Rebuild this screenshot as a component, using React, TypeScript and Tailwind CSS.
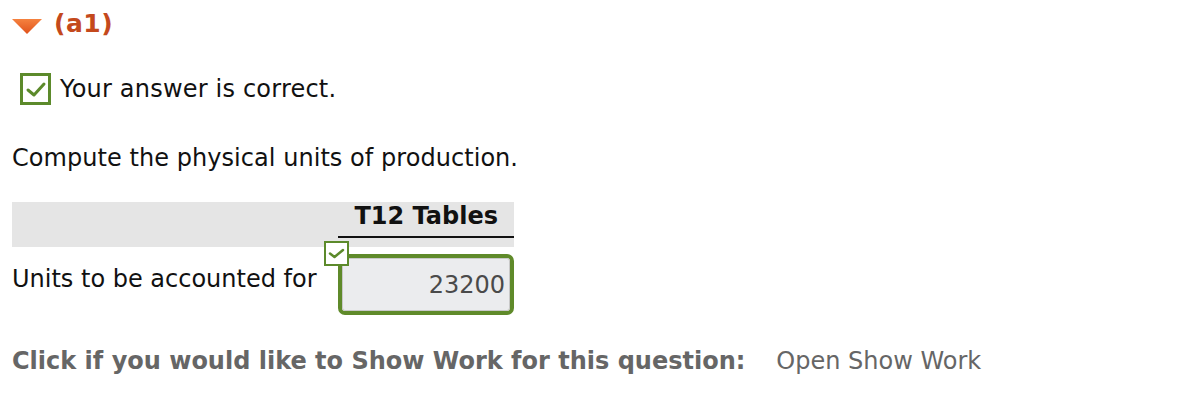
import React from "react";

export default function App() {
  return (
    <div className="w-[1192px] h-[420px] bg-white font-['DejaVu_Sans','Liberation_Sans',sans-serif] text-[24px] leading-[28px] text-[#111]">
      <div className="px-3 pt-[10px]">
        {/* Header */}
        <div className="flex items-center h-[28px]">
          <svg width="30" height="15" viewBox="0 0 30 15" className="mt-[4px]">
            <defs>
              <linearGradient id="tri" x1="0" y1="0" x2="0" y2="1">
                <stop offset="0" stopColor="#f5823f" />
                <stop offset="1" stopColor="#e0521b" />
              </linearGradient>
            </defs>
            <polygon points="0,0 30,0 15,15" fill="url(#tri)" />
          </svg>
          <span className="ml-[12px] font-bold text-[25px] text-[#c4491c] tracking-[0.5px]">(a1)</span>
        </div>

        {/* Correct row */}
        <div className="flex items-center mt-[35px] ml-[8px] h-[32px]">
          <span className="w-[31px] h-[32px] border-[3px] border-[#5c8a2b] bg-white flex items-center justify-center">
            <svg width="25" height="26" viewBox="0 0 25 26">
              <polyline points="5,14 11,19 21,8" fill="none" stroke="#5c8a2b" strokeWidth="3" strokeLinecap="round" strokeLinejoin="round" />
            </svg>
          </span>
          <span className="ml-[9px] tracking-[0.2px]">Your answer is correct.</span>
        </div>

        {/* Compute line */}
        <div className="mt-[39px] tracking-[0.05px]">Compute the physical units of production.</div>

        {/* Table */}
        <div className="mt-[30px] w-[502px]">
          <div className="grid grid-cols-[326px_176px] bg-[#e5e5e5] pb-[9px]">
            <div />
            <div className="text-right font-bold pr-[16px] pt-0 pb-[6px] border-b-2 border-[#111]">T12 Tables</div>
          </div>
          <div className="grid grid-cols-[326px_176px] mt-[7px]">
            <div className="pt-[11px]">Units to be accounted for</div>
            <div className="relative">
              <div className="h-[61px] border-[4px] border-[#5f8a2a] rounded-[7px] bg-[#ebecee] flex items-center justify-end pr-[5px]">
                <div className="absolute inset-[4px] rounded-[3px] border border-[#c8c8c8] pointer-events-none" />
                <span className="text-[#4a4a4a]">23200</span>
              </div>
              <span className="absolute left-[-14px] top-[-13px] w-[25px] h-[25px] border-2 border-[#5c8a2b] bg-white flex items-center justify-center">
                <svg width="21" height="21" viewBox="0 0 21 21">
                  <polyline points="4,10.5 8.5,14 17,7" fill="none" stroke="#5c8a2b" strokeWidth="2.5" strokeLinecap="round" strokeLinejoin="round" />
                </svg>
              </span>
            </div>
          </div>
        </div>

        {/* Show work */}
        <div className="mt-[32px] flex text-[#666]">
          <span className="font-bold">Click if you would like to Show Work for this question:</span>
          <span className="ml-[31px]">Open Show Work</span>
        </div>
      </div>
    </div>
  );
}
